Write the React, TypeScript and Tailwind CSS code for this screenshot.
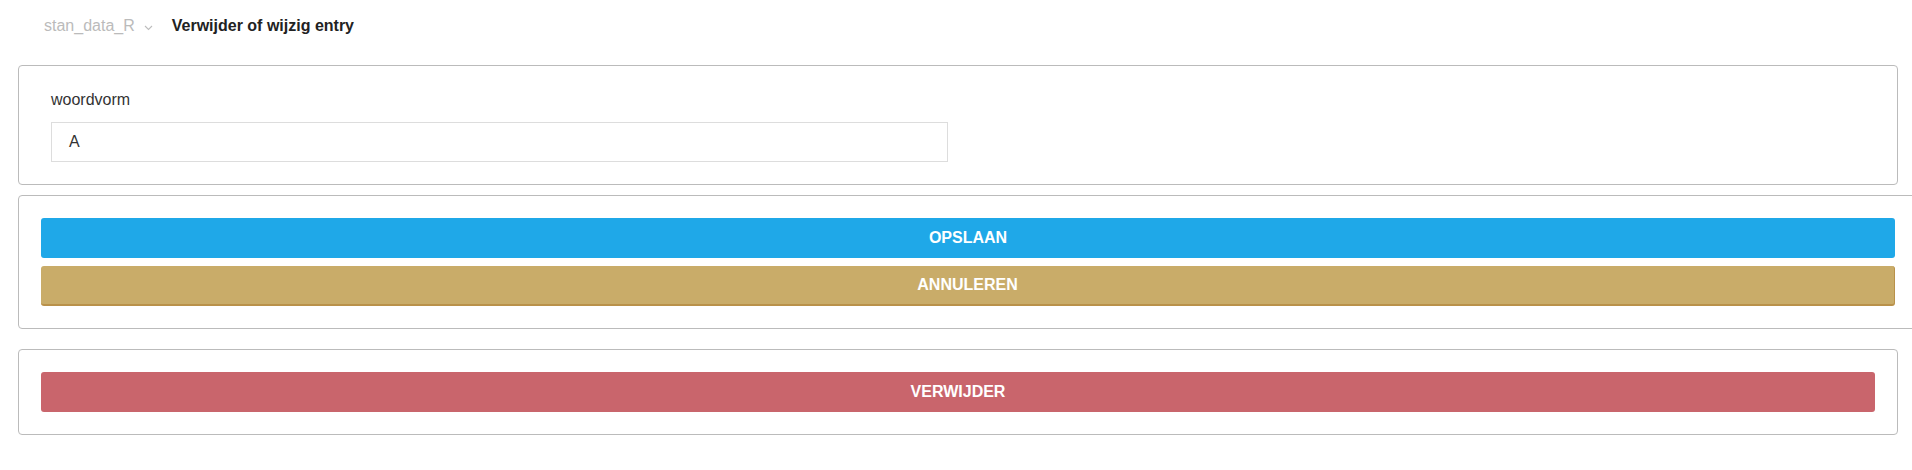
import React from 'react';

function Chevron() {
  return (
    <svg width="9" height="6" viewBox="0 0 9 6" className="ml-[9px] mt-[3px]" fill="none">
      <path d="M1 1l3.5 3.5L8 1" stroke="#bdbdbd" strokeWidth="1.1" />
    </svg>
  );
}

export default function App() {
  return (
    <div className="w-[1912px] h-[470px] overflow-hidden bg-white font-['Liberation_Sans',Arial,sans-serif]">
      {/* breadcrumb */}
      <div className="flex items-center pl-[44px] pt-[14px] h-[38px] leading-[24px]">
        <span className="text-[16px] text-[#bbbbbb]">stan_data_R</span>
        <Chevron />
        <span className="ml-[19px] text-[16px] font-bold text-[#222222]">Verwijder of wijzig entry</span>
      </div>

      {/* woordvorm */}
      <div className="mt-[27px] ml-[18px] w-[1880px] border border-[#bbbbbb] rounded-[4px] p-[22px]">
        <div className="w-1/2 px-[10px]">
          <label className="block text-[16px] leading-[24px] text-[#333333] mb-[10px]">woordvorm</label>
          <div className="h-[40px] border border-[#dddddd] flex items-center px-[17px] text-[16px] text-[#333333]">A</div>
        </div>
      </div>

      {/* save / cancel */}
      <div className="mt-[10px] ml-[18px] w-[1900px] border border-[#bbbbbb] rounded-[4px] p-[22px] flex flex-col gap-[8px]">
        <button className="h-[40px] w-full rounded-[3px] bg-[#1fa8e8] text-white font-bold text-[16px] uppercase">
          Opslaan
        </button>
        <button className="h-[40px] w-full rounded-[3px] bg-[#c9ac69] border-b-2 border-r border-[#b9914a] text-white font-bold text-[16px] uppercase">
          Annuleren
        </button>
      </div>

      {/* delete */}
      <div className="mt-[20px] ml-[18px] w-[1880px] border border-[#bbbbbb] rounded-[4px] p-[22px]">
        <button className="h-[40px] w-full rounded-[3px] bg-[#c9656c] text-white font-bold text-[16px] uppercase">
          Verwijder
        </button>
      </div>
    </div>
  );
}
